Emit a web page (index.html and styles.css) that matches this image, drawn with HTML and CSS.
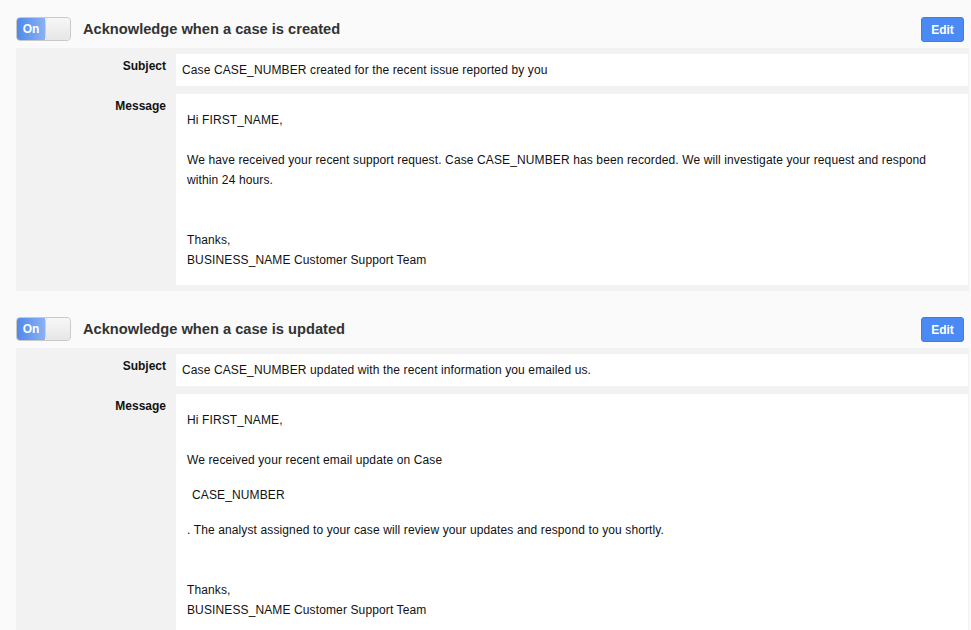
FILE: index.html
```html
<!DOCTYPE html>
<html lang="en">
<head>
    <meta charset="UTF-8">
    <title>Case Notifications</title>
    <link rel="stylesheet" href="styles.css">
</head>
<body>
    <div class="rule">
        <div class="rule-head">
            <div class="toggle on">
                <span class="toggle-label">On</span>
                <span class="toggle-knob"></span>
            </div>
            <h2 class="rule-title">Acknowledge when a case is created</h2>
            <button class="edit-button">Edit</button>
        </div>
        <div class="rule-body">
            <div class="field-label">Subject</div>
            <div class="field-value subject">Case CASE_NUMBER created for the recent issue reported by you</div>
            <div class="field-label">Message</div>
            <div class="field-value message">
                Hi FIRST_NAME,<br><br>We have received your recent support request. Case CASE_NUMBER has been recorded. We will investigate your request and respond within 24 hours.<br><br><br>Thanks,<br>BUSINESS_NAME Customer Support Team
            </div>
        </div>
    </div>

    <div class="rule">
        <div class="rule-head">
            <div class="toggle on">
                <span class="toggle-label">On</span>
                <span class="toggle-knob"></span>
            </div>
            <h2 class="rule-title">Acknowledge when a case is updated</h2>
            <button class="edit-button">Edit</button>
        </div>
        <div class="rule-body">
            <div class="field-label">Subject</div>
            <div class="field-value subject">Case CASE_NUMBER updated with the recent information you emailed us.</div>
            <div class="field-label">Message</div>
            <div class="field-value message">
                Hi FIRST_NAME,<br><br>We received your recent email update on Case
                <div class="placeholder">CASE_NUMBER</div>
                . The analyst assigned to your case will review your updates and respond to you shortly.<br><br><br>Thanks,<br>BUSINESS_NAME Customer Support Team
            </div>
        </div>
    </div>
</body>
</html>
```

FILE: styles.css
```css
* {
    box-sizing: border-box;
}

body {
    margin: 0;
    padding: 0 2px 0 16px;
    background: #fafafa;
    font-family: 'Liberation Sans', Arial, sans-serif;
    font-size: 12px;
    color: #111;
}

.rule {
    margin-bottom: 9px;
}

.rule-head {
    height: 48px;
    display: flex;
    align-items: flex-start;
    padding: 17px 5px 0 0;
}

.toggle {
    width: 55px;
    height: 24px;
    display: flex;
    border: 1px solid #c9c9c9;
    border-radius: 4px;
    overflow: hidden;
}

.toggle-label {
    width: 28px;
    background: linear-gradient(to right, #4f89ea, #8ab2f2);
    color: #fff;
    font-weight: bold;
    font-size: 12px;
    line-height: 22px;
    text-align: center;
}

.toggle-knob {
    flex: 1;
    background: linear-gradient(#f7f7f7, #e6e6e6);
    border-left: 1px solid #d0d0d0;
    border-radius: 4px;
}

.rule-title {
    flex: 1;
    margin: 0 0 0 12px;
    font-size: 14.65px;
    line-height: 24px;
    font-weight: bold;
    color: #333;
}

.edit-button {
    width: 43px;
    height: 25px;
    padding: 0;
    background: #4a8af4;
    border: 1px solid #3c7de6;
    border-radius: 3px;
    color: #fff;
    font-family: inherit;
    font-size: 12px;
    font-weight: bold;
    cursor: pointer;
}

.rule-body {
    display: grid;
    grid-template-columns: 150px 1fr;
    column-gap: 10px;
    row-gap: 8px;
    padding: 6px 1px 6px 0;
    background: #f2f2f2;
}

.field-label {
    padding-top: 4px;
    text-align: right;
    font-weight: bold;
    line-height: 16px;
}

.field-value {
    background: #fff;
    line-height: 20px;
    letter-spacing: 0.12px;
}

.subject {
    padding: 6px;
}

.message {
    padding: 16px 11px 15px;
}

.placeholder {
    margin: 15px 0;
    padding-left: 5px;
}
```
